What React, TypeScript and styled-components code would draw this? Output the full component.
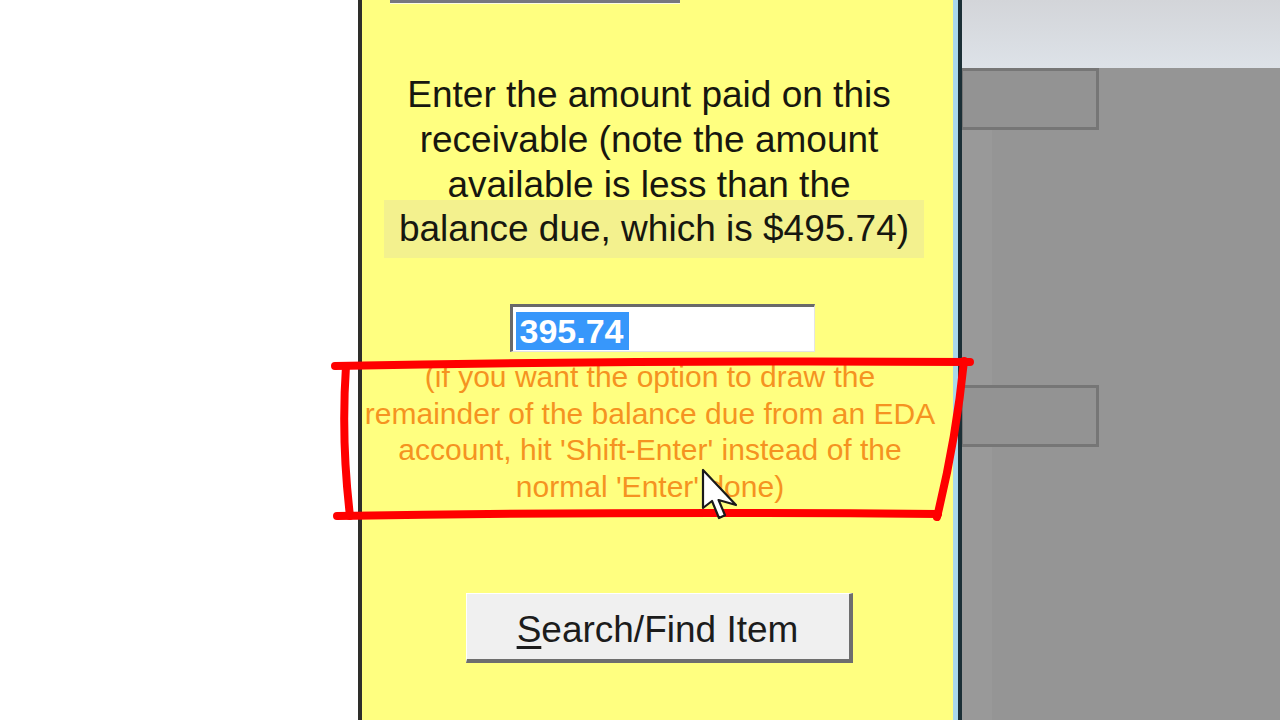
import React from "react";
import styled, { createGlobalStyle } from "styled-components";

const GlobalStyle = createGlobalStyle`
  html, body {
    margin: 0;
    padding: 0;
    background: #ffffff;
    overflow: hidden;
  }
  * {
    box-sizing: border-box;
  }
`;

const Screen = styled.div`
  position: relative;
  width: 1280px;
  height: 720px;
  display: flex;
  font-family: "Liberation Sans", Arial, sans-serif;
  overflow: hidden;
`;

const Desktop = styled.div`
  width: 358px;
  background: #ffffff;
`;

const Dialog = styled.div`
  width: 604px;
  display: flex;
  flex-direction: column;
  align-items: center;
  background: #ffff80;
  border-left: 4px solid #2e2e2a;
  border-right: 4px solid #1b2f36;
  box-shadow: inset -5px 0 0 #a9d8ea;
`;

const ButtonEdge = styled.div`
  align-self: flex-start;
  margin-left: 28px;
  width: 290px;
  height: 3px;
  background: #77777f;
  box-shadow: 0 1px 0 #fbfbe6;
`;

const Prompt = styled.div`
  margin-top: 69px;
  width: 100%;
  padding-right: 22px;
  text-align: center;
  font-size: 37px;
  line-height: 45px;
  color: #17170f;
`;

const Highlight = styled.div`
  width: 540px;
  margin: -7px 0 0 -12px;
  padding: 6px 0 7px;
  text-align: center;
  font-size: 37px;
  line-height: 45px;
  color: #17170f;
  background: #f3f18e;
`;

const AmountBox = styled.div`
  margin-top: 46px;
  margin-left: 4px;
  width: 305px;
  height: 48px;
  padding: 3px 0 0 3px;
  display: flex;
  align-items: center;
  background: #ffffff;
  border-top: 3px solid #6a6a6a;
  border-left: 3px solid #6a6a6a;
  border-right: 1px solid #e4e4e4;
  border-bottom: 1px solid #e4e4e4;
`;

const Selected = styled.span`
  display: inline-block;
  padding: 0 5px 0 4px;
  height: 38px;
  line-height: 38px;
  font-size: 34px;
  font-weight: bold;
  color: #ffffff;
  background: #3797fb;
`;

const Note = styled.div`
  margin-top: 7px;
  width: 100%;
  padding-right: 20px;
  text-align: center;
  font-size: 30px;
  line-height: 36.6px;
  color: #f59321;
`;

const FindButton = styled.button`
  margin-top: 88px;
  margin-right: 2px;
  width: 387px;
  height: 70px;
  padding: 6px 0 0;
  background: #f0f0f0;
  border-style: solid;
  border-width: 1px 4px 4px 1px;
  border-color: #ffffff #6e6e6e #6e6e6e #ffffff;
  font-family: "Liberation Sans", Arial, sans-serif;
  font-size: 37px;
  color: #1c1c1c;
  cursor: pointer;

  u {
    text-decoration-thickness: 3px;
    text-underline-offset: 4px;
  }
`;

const Backdrop = styled.div`
  flex: 1;
  display: flex;
  flex-direction: column;
  background: linear-gradient(90deg, #999999 0, #999999 30px, #959595 30px);
`;

const TitleStrip = styled.div`
  height: 68px;
  background: linear-gradient(180deg, #d3d5d9 0%, #dde2e8 100%);
`;

const GhostField = styled.div<{ $top: number }>`
  margin-top: ${(p) => p.$top}px;
  width: 137px;
  height: 62px;
  background: #939393;
  border: 3px solid #767676;
  border-left-width: 1px;
`;

const Overlay = styled.svg`
  position: absolute;
  left: 0;
  top: 0;
  width: 1280px;
  height: 720px;
  pointer-events: none;
`;

export default function App() {
  return (
    <>
      <GlobalStyle />
      <Screen>
        <Desktop />
        <Dialog>
          <ButtonEdge />
          <Prompt>
            Enter the amount paid on this
            <br />
            receivable (note the amount
            <br />
            available is less than the
          </Prompt>
          <Highlight>balance due, which is $495.74)</Highlight>
          <AmountBox>
            <Selected>395.74</Selected>
          </AmountBox>
          <Note>
            (if you want the option to draw the
            <br />
            remainder of the balance due from an EDA
            <br />
            account, hit 'Shift-Enter' instead of the
            <br />
            normal 'Enter' done)
          </Note>
          <FindButton>
            <u>S</u>earch/Find Item
          </FindButton>
        </Dialog>
        <Backdrop>
          <TitleStrip />
          <GhostField $top={0} />
          <GhostField $top={255} />
        </Backdrop>
        <Overlay viewBox="0 0 1280 720">
          <g
            fill="none"
            stroke="#ff0000"
            strokeWidth="8"
            strokeLinecap="round"
            strokeLinejoin="round"
          >
            <path d="M335 366 Q 650 360 970 362" />
            <path d="M964 361 Q 956 440 937 517" />
            <path d="M337 516 Q 640 511 938 514" />
            <path d="M346 366 Q 341 440 350 516" />
          </g>
          <g transform="translate(703 470) scale(2)">
            <path
              d="M0 0 L0 19 L4.5 15.5 L8 24 L11 22.6 L7.8 15 L16.5 17.5 Z"
              fill="#ffffff"
              stroke="#1a1a1a"
              strokeWidth="1.1"
              strokeLinejoin="round"
            />
          </g>
        </Overlay>
      </Screen>
    </>
  );
}
